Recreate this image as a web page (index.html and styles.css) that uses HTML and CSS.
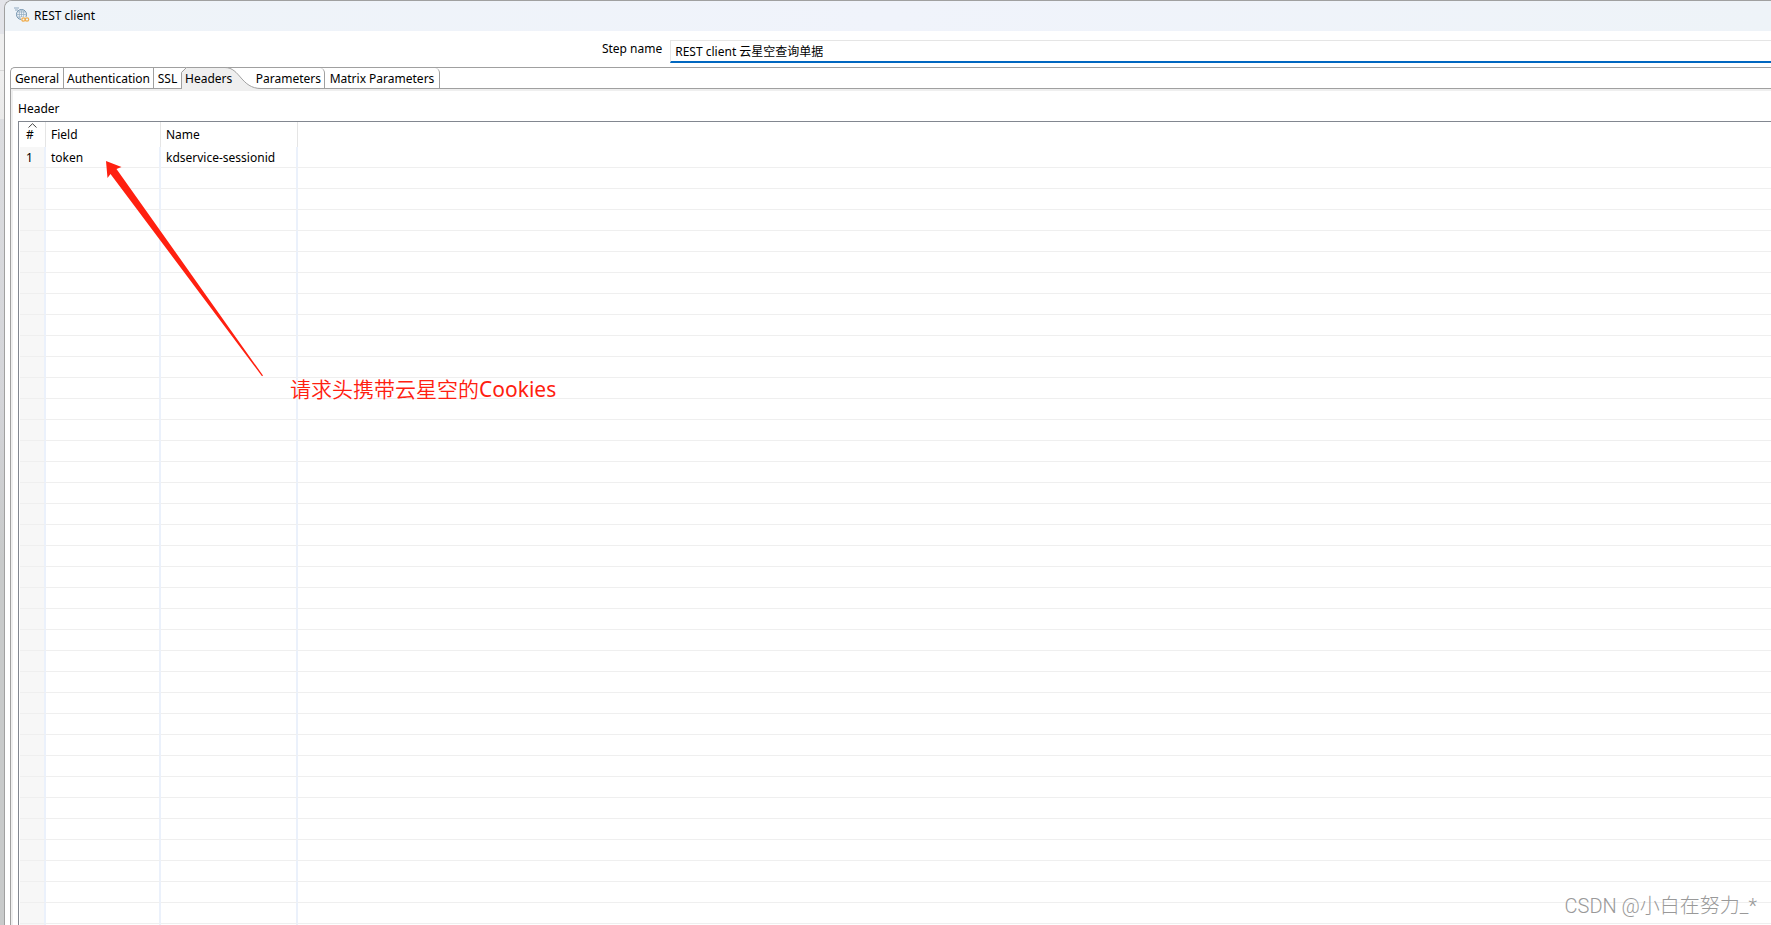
FILE: index.html
```
<!DOCTYPE html>
<html lang="zh-CN">
  <head>
    <meta charset="utf-8" />
    <meta name="viewport" content="width=device-width, initial-scale=1" />
    <title>REST client</title>
    <link rel="stylesheet" href="styles.css">
  </head>
  <body>
    <div class="window">
      <header class="titlebar">
        <svg class="app-icon" width="16" height="16" viewBox="0 0 16 16" fill="none">
          <path d="M0 1h5M1 3h3" stroke="#8fa9bf" stroke-width="1.2" />
          <circle cx="7.5" cy="7.500" r="5" stroke="#6f91ad" />
          <ellipse cx="7.5" cy="7.500" rx="2.200" ry="5" stroke="#8fa9bf" stroke-width=".7" />
          <path d="M2.500 7.500h10M3.500 5h8M3.500 10h6M7.500 2.500v10" stroke="#8fa9bf" stroke-width=".7" />
          <path d="M7 10h9v5H7z" fill="#eef3f8" />
          <circle cx="9.500" cy="12.500" r="1.700" stroke="#f0ad4e" stroke-width="1.300" />
          <circle cx="13" cy="12.500" r="1.700" stroke="#f0ad4e" stroke-width="1.300" />
        </svg>
        <span>REST client</span>
      </header>

      <form class="step-form">
        <label for="step-name">Step name</label>
        <input id="step-name" class="step-input" type="text" value="REST client 云星空查询单据" />
      </form>

      <nav class="tabs">
        <button class="tab tab-general">General</button>
        <button class="tab tab-auth">Authentication</button>
        <button class="tab tab-ssl">SSL</button>
        <button class="tab tab-active">
          <svg class="tab-shape" width="82" height="24" viewBox="0 0 82 24" fill="none">
            <path d="M0 24V5L5 .5H44C59 .5 60 21.500 80 21.500H82V24Z" fill="#efefef" />
            <path d="M.5 22V5.500L5.500 .5H44C59 .5 60 21.500 80 21.500H82" stroke="#a0a0a0" />
          </svg>
          <span>Headers</span>
        </button>
        <button class="tab tab-params">Parameters</button>
        <button class="tab tab-matrix">Matrix Parameters</button>
      </nav>

      <main class="panel">
        <div class="panel-label" id="header-label">Header</div>
        <div class="grid">
          <table class="fields" aria-labelledby="header-label">
            <thead>
              <tr>
                <th class="col-num">
                  <svg class="sort" width="9" height="5" viewBox="0 0 9 5" fill="none">
                    <path d="M.5 4.500L4.500 .7L8.500 4.500" stroke="#444" />
                  </svg>
                  #
                </th>
                <th class="col-field">Field</th>
                <th class="col-name">Name</th>
                <th></th>
              </tr>
            </thead>
            <tbody id="rows">
              <tr>
                <td>1</td>
                <td>token</td>
                <td>kdservice-sessionid</td>
                <td></td>
              </tr>
            </tbody>
          </table>
        </div>
      </main>
    </div>

    <!-- Annotations over the dialog -->
    <svg class="arrow" width="160" height="217" viewBox="0 0 160 217">
      <path d="M0 0L15.500 6L10.500 8L157 214.500L156 215.200L4.500 13L1.500 17Z" fill="#ff2010" />
    </svg>
    <p class="note">请求头携带云星空的<span class="note-latin">Cookies</span></p>
    <p class="watermark">CSDN @小白在努力_*</p>

    <script>
      // Fill the rest of the grid with empty rows
      var rows = document.getElementById("rows");
      var height = rows.rows[0].offsetHeight;
      var count = Math.ceil((window.innerHeight - rows.getBoundingClientRect().bottom) / height);

      for (var i = 0; i < count; i++) {
        var row = rows.insertRow();
        for (var j = 0; j < 4; j++) {
          row.insertCell();
        }
      }
    </script>
  </body>
</html>
```
FILE: styles.css
```
* {
  box-sizing: border-box;
}

body {
  margin: 0;
  height: 100vh;
  padding-left: 4px;
  overflow: hidden;
  position: relative;
  background: linear-gradient(#e3e4e9 34px, #efefef 34px, #efefef 70px, #d8d8d8 70px, #d8d8d8 71px, #efefef 71px, #eaeaea 119px, #dcdde0 119px, #d4d5d9 400px, #c8caca 560px);
  font-family: "Noto Sans", "Noto Sans CJK SC", sans-serif;
  font-size: 12px;
  color: #000;
}

.window {
  height: 100%;
  display: flex;
  flex-direction: column;
  overflow: hidden;
  border-top: 1px solid #a0a0a0;
  border-left: 1px solid #a0a0a0;
  border-top-left-radius: 8px;
  background: #fff;
}

.titlebar {
  display: flex;
  align-items: center;
  gap: 4px;
  height: 30px;
  flex: none;
  padding: 0 0 2px 9px;
  background: linear-gradient(90deg, #eef3f8, #f0f3fb, #eef3f8);
}

.step-form {
  display: flex;
  align-items: center;
  flex: none;
  height: 36px;
  padding: 9px 0 4px;
  margin-left: 33.8%;
}

.step-form label {
  line-height: 16px;
  padding-bottom: 6px;
}

.step-input {
  flex: 1;
  height: 23px;
  margin-left: 8px;
  padding: 0 4px;
  border: 1px solid #e5e5e5;
  border-right: 0;
  border-bottom: 2px solid #0067c0;
  outline: 0;
  font: inherit;
}

/* Tab folder */
.tabs {
  display: flex;
  flex: none;
  height: 22px;
  margin-left: 5px;
  border: 1px solid #a0a0a0;
  border-right: 0;
  border-top-left-radius: 5px;
}

.tab {
  position: relative;
  padding: 2px 0 0;
  border: 0;
  border-right: 1px solid #a0a0a0;
  background: none;
  font: inherit;
  line-height: 18px;
  white-space: nowrap;
}

.tab-general {
  width: 53px;
}

.tab-auth {
  width: 90px;
}

.tab-ssl {
  width: 27px;
  border-right: 0;
}

.tab-active {
  width: 70px;
  padding-left: 4px;
  border: 0;
  text-align: left;
}

.tab-active span {
  position: relative;
}

.tab-shape {
  position: absolute;
  top: -1px;
  left: 0;
}

.tab-params {
  width: 74px;
  padding-right: 3px;
  border-top-right-radius: 5px;
  text-align: right;
}

.tab-matrix {
  width: 115px;
  border-top-right-radius: 5px;
}

.panel {
  flex: 1;
  min-height: 0;
  display: flex;
  flex-direction: column;
  margin-left: 5px;
  padding-left: 7px;
  border-left: 1px solid #a0a0a0;
  box-shadow: inset 2px 2px #efefef;
}

.panel-label {
  padding: 12px 0 4px;
  line-height: 16px;
}

.grid {
  flex: 1;
  min-height: 0;
  overflow: hidden;
  padding-left: 1px;
  border-top: 1px solid #828790;
  border-left: 1px solid #828790;
}

.fields {
  width: 100%;
  table-layout: fixed;
  border-collapse: separate;
  border-spacing: 0;
}

.fields th,
.fields td {
  padding: 0 0 0 5px;
  text-align: left;
  font-weight: normal;
  white-space: nowrap;
}

.fields th {
  position: relative;
  height: 25px;
  border-right: 1px solid #e5e5e5;
}

.fields td {
  height: 21px;
  padding-top: 2px;
  line-height: 18px;
  border-right: 2px solid #ebf1fb;
  border-bottom: 1px solid #efefef;
}

.fields th:first-child,
.fields td:first-child {
  padding-left: 6px;
}

.fields th:last-child,
.fields td:last-child {
  border-right: 0;
}

.fields td:first-child {
  background: #f7f7f7;
}

.col-num {
  width: 26px;
}

.col-field {
  width: 115px;
}

.col-name {
  width: 137px;
}

.sort {
  position: absolute;
  top: 1px;
  left: 8px;
}

.arrow {
  position: absolute;
  top: 161px;
  left: 106px;
}

.note {
  position: absolute;
  top: 374px;
  left: 290px;
  margin: 0;
  color: #ff2010;
  font-size: 21px;
  font-weight: 350;
  line-height: 30px;
}

.note-latin {
  font-weight: 400;
}

.watermark {
  position: absolute;
  right: 14px;
  bottom: 6px;
  margin: 0;
  color: #999;
  font-family: Roboto, "Noto Sans CJK SC", sans-serif;
  font-size: 20px;
  font-weight: 300;
  line-height: 26px;
}
```
